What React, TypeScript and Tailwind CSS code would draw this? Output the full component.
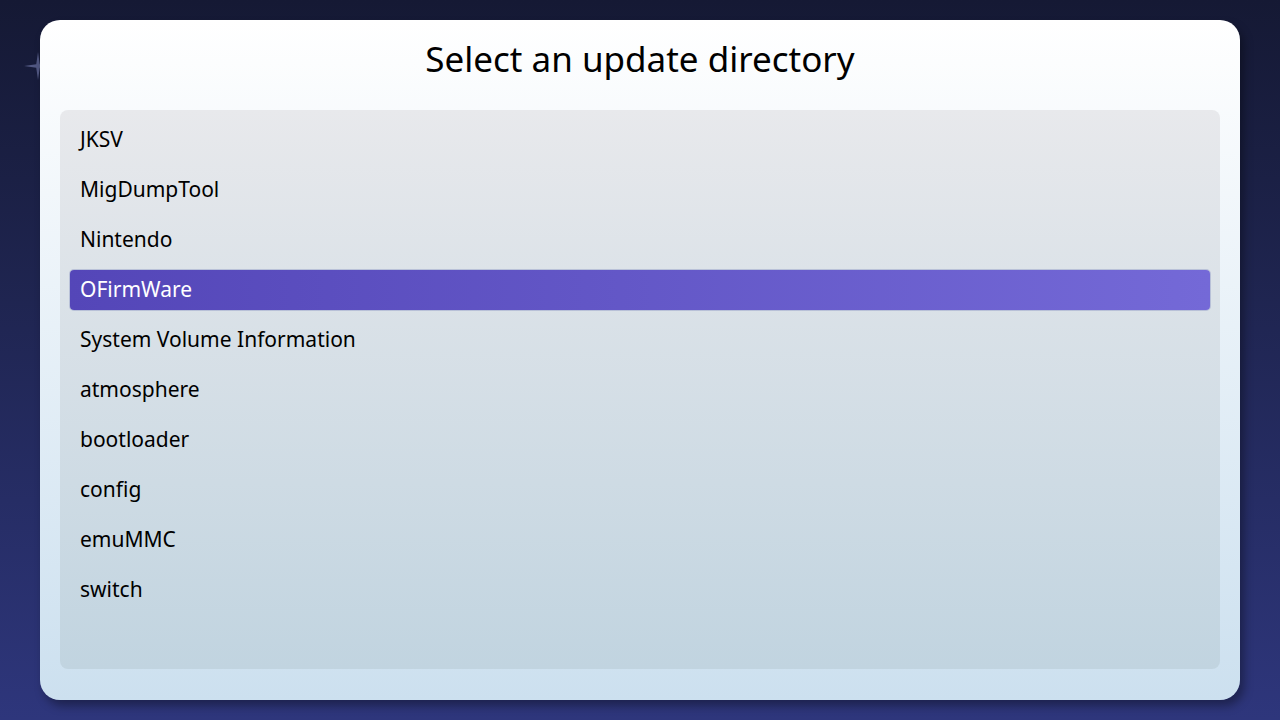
import React from 'react';

const directories = [
  'JKSV',
  'MigDumpTool',
  'Nintendo',
  'OFirmWare',
  'System Volume Information',
  'atmosphere',
  'bootloader',
  'config',
  'emuMMC',
  'switch',
];

const App: React.FC = () => {
  const selected = 'OFirmWare';

  return (
    <div
      className="relative w-[1280px] h-[720px] overflow-hidden bg-gradient-to-b from-[#151934] to-[#2e367c] p-[20px_40px]"
      style={{ fontFamily: '"Noto Sans", "Open Sans", sans-serif' }}
    >
      {/* sparkle behind the dialog */}
      <svg className="absolute left-[24px] top-[52px] w-[28px] h-[28px] opacity-50" viewBox="0 0 24 24">
        <path d="M12 0 L13.5 10.5 L24 12 L13.5 13.5 L12 24 L10.5 13.5 L0 12 L10.5 10.5 Z" fill="#8b93c9" />
      </svg>

      {/* Dialog */}
      <div className="relative h-full rounded-[20px] bg-gradient-to-b from-white to-[#cce0ef] shadow-[4px_6px_10px_rgba(0,0,0,0.35)] flex flex-col px-[20px] pb-[31px]">
        <div className="h-[90px] flex items-center justify-center pb-[14px]">
          <h1 className="text-[35px] leading-none text-black">Select an update directory</h1>
        </div>

        <div className="flex-1 rounded-[8px] bg-gradient-to-b from-[#e8e9ec] to-[#c1d4e0] p-[10px] flex flex-col gap-[10px]">
          {directories.map(dir => (
            <div
              key={dir}
              className={
                dir === selected
                  ? 'h-[40px] shrink-0 flex items-center px-[10px] rounded-[4px] bg-gradient-to-r from-[#5446b8] to-[#7469d7] text-white shadow-[0_0_0_1px_rgba(150,160,200,0.5)]'
                  : 'h-[40px] shrink-0 flex items-center px-[10px] text-black'
              }
            >
              <span className="text-[21px]">{dir}</span>
            </div>
          ))}
        </div>
      </div>
    </div>
  );
};

export default App;
